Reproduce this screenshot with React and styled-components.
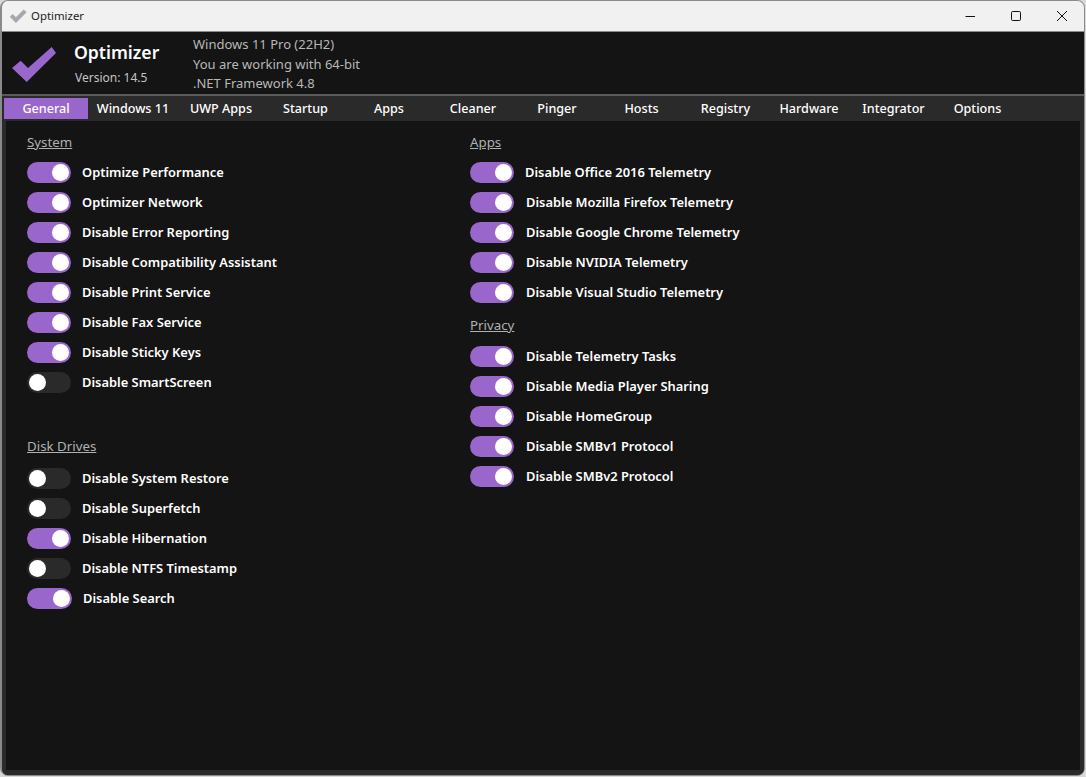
import React from "react";
import styled, { createGlobalStyle } from "styled-components";

const GlobalStyle = createGlobalStyle`
  html, body {
    margin: 0;
    padding: 0;
    height: 100%;
    background: #d8d8d8;
    overflow: hidden;
  }
  #root {
    height: 100%;
  }
`;

const tabs = [
  { name: "General", width: 84 },
  { name: "Windows 11", width: 90 },
  { name: "UWP Apps", width: 86 },
  { name: "Startup", width: 83 },
  { name: "Apps", width: 84 },
  { name: "Cleaner", width: 84 },
  { name: "Pinger", width: 84 },
  { name: "Hosts", width: 85 },
  { name: "Registry", width: 83 },
  { name: "Hardware", width: 84 },
  { name: "Integrator", width: 85 },
  { name: "Options", width: 83 },
];

const leftColumn = [
  {
    title: "System",
    before: 0,
    after: 3,
    labelGap: 11,
    items: [
      { label: "Optimize Performance", on: true },
      { label: "Optimizer Network", on: true },
      { label: "Disable Error Reporting", on: true },
      { label: "Disable Compatibility Assistant", on: true },
      { label: "Disable Print Service", on: true },
      { label: "Disable Fax Service", on: true },
      { label: "Disable Sticky Keys", on: true },
      { label: "Disable SmartScreen", on: false },
    ],
  },
  {
    title: "Disk Drives",
    before: 37,
    after: 5,
    labelGap: 11,
    items: [
      { label: "Disable System Restore", on: false },
      { label: "Disable Superfetch", on: false },
      { label: "Disable Hibernation", on: true },
      { label: "Disable NTFS Timestamp", on: false },
      { label: "Disable Search", on: true, wide: true },
    ],
  },
];

const rightColumn = [
  {
    title: "Apps",
    before: 0,
    after: 3,
    labelGap: 12,
    items: [
      { label: "Disable Office 2016 Telemetry", on: true, labelGap: 11 },
      { label: "Disable Mozilla Firefox Telemetry", on: true },
      { label: "Disable Google Chrome Telemetry", on: true },
      { label: "Disable NVIDIA Telemetry", on: true },
      { label: "Disable Visual Studio Telemetry", on: true },
    ],
  },
  {
    title: "Privacy",
    before: 6,
    after: 4,
    labelGap: 12,
    items: [
      { label: "Disable Telemetry Tasks", on: true },
      { label: "Disable Media Player Sharing", on: true },
      { label: "Disable HomeGroup", on: true },
      { label: "Disable SMBv1 Protocol", on: true },
      { label: "Disable SMBv2 Protocol", on: true },
    ],
  },
];

function Section({ section }) {
  return (
    <SectionBox $before={section.before}>
      <SectionTitle $after={section.after}>{section.title}</SectionTitle>
      {section.items.map((item) => (
        <Row key={item.label}>
          <Toggle $on={item.on} $wide={item.wide}>
            <Knob />
          </Toggle>
          <RowLabel $gap={item.labelGap ?? section.labelGap}>{item.label}</RowLabel>
        </Row>
      ))}
    </SectionBox>
  );
}

export default function App() {
  return (
    <Window>
      <GlobalStyle />
      <TitleBar>
        <TitleLeft>
          <svg width="18" height="16" viewBox="0 0 44 36">
            <path d="M2 20 L9 13 L17 21 L36 2 L43 9 L17 35 Z" fill="#a8a8a8" />
          </svg>
          <TitleText>Optimizer</TitleText>
        </TitleLeft>
        <WindowButtons>
          <WindowButton>
            <svg width="12" height="12" viewBox="0 0 12 12">
              <path d="M1.5 6.5 H11" stroke="#111" fill="none" />
            </svg>
          </WindowButton>
          <WindowButton>
            <svg width="12" height="12" viewBox="0 0 12 12">
              <rect x="1.5" y="1.5" width="9" height="9" rx="1.2" stroke="#111" fill="none" />
            </svg>
          </WindowButton>
          <WindowButton>
            <svg width="12" height="12" viewBox="0 0 12 12">
              <path d="M1 1 L11 11 M11 1 L1 11" stroke="#111" fill="none" />
            </svg>
          </WindowButton>
        </WindowButtons>
      </TitleBar>
      <Body>
        <Header>
          <LogoMark viewBox="0 0 44 36" width="44" height="36">
            <path d="M0 21 L8.7 13.7 L16 21 L39.7 0 L44 6 L14.7 35 Z" fill="#9966cc" />
          </LogoMark>
          <Brand>
            <BrandName>Optimizer</BrandName>
            <BrandVersion>Version: 14.5</BrandVersion>
          </Brand>
          <SystemInfo>
            <span>Windows 11 Pro (22H2)</span>
            <span>You are working with 64-bit</span>
            <span>.NET Framework 4.8</span>
          </SystemInfo>
        </Header>
        <TabStrip>
          {tabs.map((tab, i) => (
            <Tab key={tab.name} $active={i === 0} $width={tab.width}>
              {tab.name}
            </Tab>
          ))}
        </TabStrip>
        <Content>
          <Column>
            {leftColumn.map((s) => (
              <Section key={s.title} section={s} />
            ))}
          </Column>
          <Column>
            {rightColumn.map((s) => (
              <Section key={s.title} section={s} />
            ))}
          </Column>
        </Content>
      </Body>
    </Window>
  );
}

const Window = styled.div`
  box-sizing: border-box;
  height: 776px;
  width: 1085px;
  margin-left: 0;
  display: flex;
  flex-direction: column;
  border: 1px solid #8a8a8a;
  border-left-width: 2px;
  border-radius: 8px;
  overflow: hidden;
  font-family: "Noto Sans", "Open Sans", sans-serif;
`;

const TitleBar = styled.div`
  height: 30px;
  flex: none;
  display: flex;
  align-items: center;
  justify-content: space-between;
  background: #f1f1f1;
  border-bottom: 1px solid #8a8a8a;
`;

const TitleLeft = styled.div`
  display: flex;
  align-items: center;
  gap: 4px;
  padding-left: 7px;
`;

const TitleText = styled.span`
  font-size: 11.4px;
  color: #222;
  padding-bottom: 2px;
`;

const WindowButtons = styled.div`
  display: flex;
  margin-right: -1px;
`;

const WindowButton = styled.div`
  width: 46px;
  height: 30px;
  display: flex;
  align-items: center;
  justify-content: center;
`;

const Body = styled.div`
  flex: 1;
  display: flex;
  flex-direction: column;
  background: #141414;
  min-height: 0;
`;

const Header = styled.div`
  height: 62px;
  flex: none;
  display: flex;
  align-items: flex-start;
  color: #fff;
`;

const LogoMark = styled.svg`
  flex: none;
  margin: 15px 0 0 10px;
`;

const Brand = styled.div`
  display: flex;
  flex-direction: column;
  margin-left: 18px;
  width: 119px;
  padding-top: 7px;
`;

const BrandName = styled.div`
  font-size: 17.6px;
  line-height: 26px;
  font-weight: 600;
  color: #fff;
`;

const BrandVersion = styled.div`
  font-size: 12px;
  line-height: 18px;
  margin-top: 4px;
  margin-left: 1px;
  color: #c4c4c4;
`;

const SystemInfo = styled.div`
  display: flex;
  flex-direction: column;
  font-size: 13px;
  line-height: 19.6px;
  padding-top: 3px;
  color: #b8b8b8;
`;

const TabStrip = styled.div`
  flex: none;
  height: 21px;
  display: flex;
  padding: 2px 0 2px 2px;
  background: #2a2a2a;
  border-top: 2px solid #5a5a5a;
`;

const Tab = styled.div`
  width: ${(props) => props.$width}px;
  display: flex;
  align-items: center;
  justify-content: center;
  font-size: 12.6px;
  font-weight: 500;
  color: #fff;
  background: ${(props) => (props.$active ? "#9966cc" : "transparent")};
`;

const Content = styled.div`
  flex: 1;
  display: flex;
  padding: 9px 0 0 21px;
  border: solid #2a2a2a;
  border-width: 0 4px 5px 4px;
`;

const Column = styled.div`
  width: 443px;
  display: flex;
  flex-direction: column;
`;

const SectionBox = styled.div`
  display: flex;
  flex-direction: column;
  margin-top: ${(props) => props.$before}px;
`;

const SectionTitle = styled.div`
  font-size: 13.3px;
  line-height: 24px;
  height: 24px;
  margin-bottom: ${(props) => props.$after}px;
  color: #b0b0b0;
  text-decoration: underline;
`;

const Row = styled.div`
  height: 30px;
  display: flex;
  align-items: center;
`;

const Toggle = styled.div`
  width: ${(props) => (props.$wide ? 45 : 44)}px;
  height: 21px;
  border-radius: 10.5px;
  flex: none;
  display: flex;
  align-items: center;
  padding: 0 2px;
  box-sizing: border-box;
  justify-content: ${(props) => (props.$on ? "flex-end" : "flex-start")};
  background: ${(props) => (props.$on ? "#9966cc" : "#2a2a2a")};
`;

const Knob = styled.div`
  width: 17px;
  height: 17px;
  border-radius: 50%;
  background: #fff;
`;

const RowLabel = styled.span`
  margin-left: ${(props) => props.$gap}px;
  font-size: 12.9px;
  font-weight: 600;
  color: #fff;
  white-space: nowrap;
`;
